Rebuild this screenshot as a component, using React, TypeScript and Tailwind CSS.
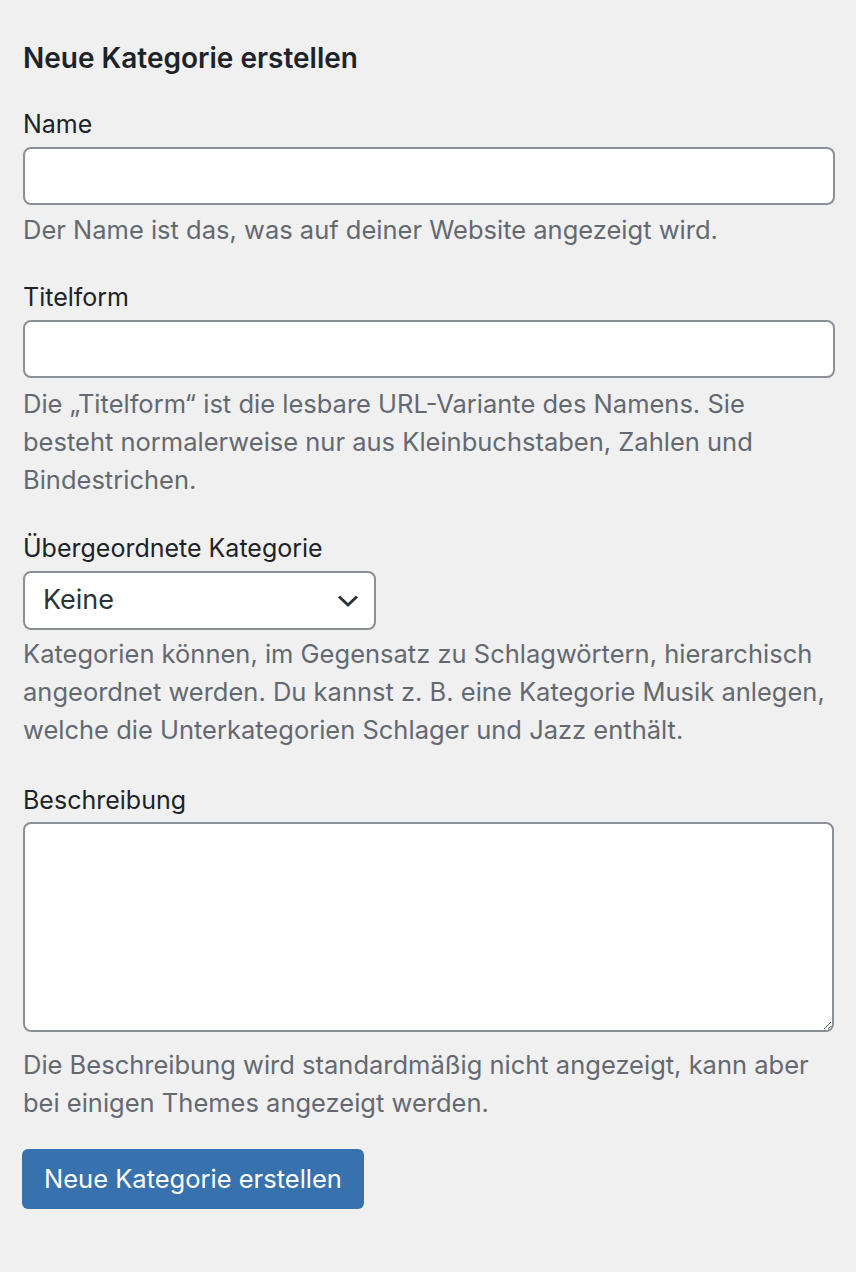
import React, { useState } from "react";

const font = { fontFamily: "Inter, 'Noto Sans', sans-serif" };

const Field = ({ label, children, help, className }: { label: string; children: React.ReactNode; help: React.ReactNode; className?: string }) => (
  <div className={className}>
    <label className="block text-[25px] leading-[36px] text-[#1d2327]">{label}</label>
    {children}
    <p className="text-[25.5px] leading-[38px] text-[#646970]">{help}</p>
  </div>
);

const App = () => {
  const [form, setForm] = useState({ name: "", slug: "", parent: "-1", description: "" });

  const handleChange = (e: React.ChangeEvent<HTMLInputElement | HTMLTextAreaElement | HTMLSelectElement>) => {
    setForm((prev) => ({ ...prev, [e.target.name]: e.target.value }));
  };

  return (
    <div style={font} className="min-h-[1272px] w-[856px] bg-[#f0f0f1] pl-[23px] pr-[21px] pt-[40px]">
      <h2 className="text-[28px] font-semibold leading-[36px] text-[#1d2327]">Neue Kategorie erstellen</h2>

      <Field
        className="mt-[30px]"
        label="Name"
        help="Der Name ist das, was auf deiner Website angezeigt wird."
      >
        <input
          name="name"
          value={form.name}
          onChange={handleChange}
          className="mt-[5px] mb-[6px] block h-[58px] w-full rounded-[8px] border-2 border-[#8c8f94] bg-white px-4 text-[24px] outline-none"
        />
      </Field>

      <Field
        className="mt-[30px]"
        label="Titelform"
        help="Die „Titelform“ ist die lesbare URL-Variante des Namens. Sie besteht normalerweise nur aus Kleinbuchstaben, Zahlen und Bindestrichen."
      >
        <input
          name="slug"
          value={form.slug}
          onChange={handleChange}
          className="mt-[5px] mb-[7px] block h-[58px] w-full rounded-[8px] border-2 border-[#8c8f94] bg-white px-4 text-[24px] outline-none"
        />
      </Field>

      <Field
        className="mt-[31px]"
        label="Übergeordnete Kategorie"
        help="Kategorien können, im Gegensatz zu Schlagwörtern, hierarchisch angeordnet werden. Du kannst z. B. eine Kategorie Musik anlegen, welche die Unterkategorien Schlager und Jazz enthält."
      >
        <div className="relative mt-[5px] mb-[5px] w-[353px]">
          <select
            name="parent"
            value={form.parent}
            onChange={handleChange}
            style={font}
            className="block h-[59px] w-full appearance-none rounded-[8px] border-2 border-[#8c8f94] bg-white pl-[18px] text-[27px] text-[#2c3338] outline-none"
          >
            <option value="-1">Keine</option>
          </select>
          <svg className="pointer-events-none absolute right-[17px] top-[23px]" width="22" height="14" viewBox="0 0 22 14" fill="none">
            <path d="M2 2.5 11 11 20 2.5" stroke="#2c3338" strokeWidth="3" />
          </svg>
        </div>
      </Field>

      <Field
        className="mt-[33px]"
        label="Beschreibung"
        help="Die Beschreibung wird standardmäßig nicht angezeigt, kann aber bei einigen Themes angezeigt werden."
      >
        <textarea
          name="description"
          value={form.description}
          onChange={handleChange}
          className="mt-[4px] mb-[14px] block h-[210px] w-[811px] rounded-[8px] border-2 border-[#8c8f94] bg-white p-3 text-[24px] outline-none"
        />
      </Field>

      <button
        type="submit"
        className="-ml-px mt-[27px] h-[60px] rounded-[6px] bg-[#3872ae] px-[22px] text-[25.5px] text-white"
      >
        Neue Kategorie erstellen
      </button>
    </div>
  );
};

export default App;
